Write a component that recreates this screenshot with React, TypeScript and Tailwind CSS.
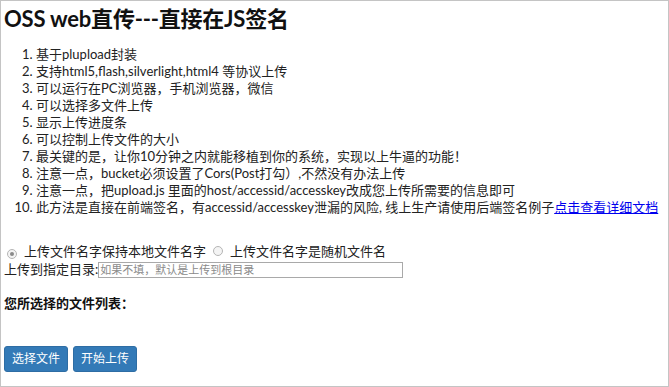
import React from "react";

const items = [
  "基于plupload封装",
  "支持html5,flash,silverlight,html4 等协议上传",
  "可以运行在PC浏览器，手机浏览器，微信",
  "可以选择多文件上传",
  "显示上传进度条",
  "可以控制上传文件的大小",
  "最关键的是，让你10分钟之内就能移植到你的系统，实现以上牛逼的功能！",
  "注意一点，bucket必须设置了Cors(Post打勾）,不然没有办法上传",
  "注意一点，把upload.js 里面的host/accessid/accesskey改成您上传所需要的信息即可",
];

function Radio({ checked }: { checked?: boolean }) {
  return (
    <span className="inline-flex items-center justify-center w-[10px] h-[10px] rounded-full border border-[#b5b5b5] bg-[#f4f4f4] shrink-0">
      {checked && <span className="w-[4px] h-[4px] rounded-full bg-[#8a8a8a]" />}
    </span>
  );
}

export default function App() {
  return (
    <div
      className="w-[669px] h-[387px] border border-[#c4c4c4] bg-white text-[#111] px-[3px] overflow-hidden"
      style={{ fontFamily: 'Lato, "Noto Sans CJK SC", sans-serif' }}
    >
      {/* 标题 */}
      <h1 className="text-[22px] leading-[26px] font-bold mt-[5px] tracking-[-0.2px]">
        OSS web直传---直接在JS签名
      </h1>

      <ol className="list-decimal pl-[32px] mt-[14px] text-[13px] leading-[17px] text-[#222]">
        {items.map((t, i) => (
          <li key={i} className="whitespace-nowrap">
            {t}
          </li>
        ))}
        <li className="whitespace-nowrap">
          此方法是直接在前端签名，有accessid/accesskey泄漏的风险, 线上生产请使用后端签名例子
          <a href="#" className="text-[#0000ee] underline">
            点击查看详细文档
          </a>
        </li>
      </ol>

      <div className="mt-[27px] text-[13px] leading-[17px] text-[#222]">
        <div className="flex items-center">
          <span className="ml-[3px] mr-[7px]">
            <Radio checked />
          </span>
          <span>上传文件名字保持本地文件名字</span>
          <span className="ml-[7px] mr-[7px]">
            <Radio />
          </span>
          <span>上传文件名字是随机文件名</span>
        </div>
        <div className="flex items-center mt-[1px]">
          <span>上传到指定目录:</span>
          <input
            type="text"
            placeholder="如果不填，默认是上传到根目录"
            className="w-[305px] h-[16px] border border-[#a9a9a9] text-[11px] px-[1px] placeholder:text-[#8a8a8a] outline-none"
          />
        </div>
      </div>

      <h4 className="mt-[17px] text-[13px] leading-[17px] font-bold">您所选择的文件列表：</h4>

      <div className="flex gap-[5px] mt-[34px]">
        <button className="w-[64px] h-[26px] rounded-[3px] bg-[#337ab7] border border-[#2e6da4] text-white text-[12px]">
          选择文件
        </button>
        <button className="w-[64px] h-[26px] rounded-[3px] bg-[#337ab7] border border-[#2e6da4] text-white text-[12px]">
          开始上传
        </button>
      </div>
    </div>
  );
}
